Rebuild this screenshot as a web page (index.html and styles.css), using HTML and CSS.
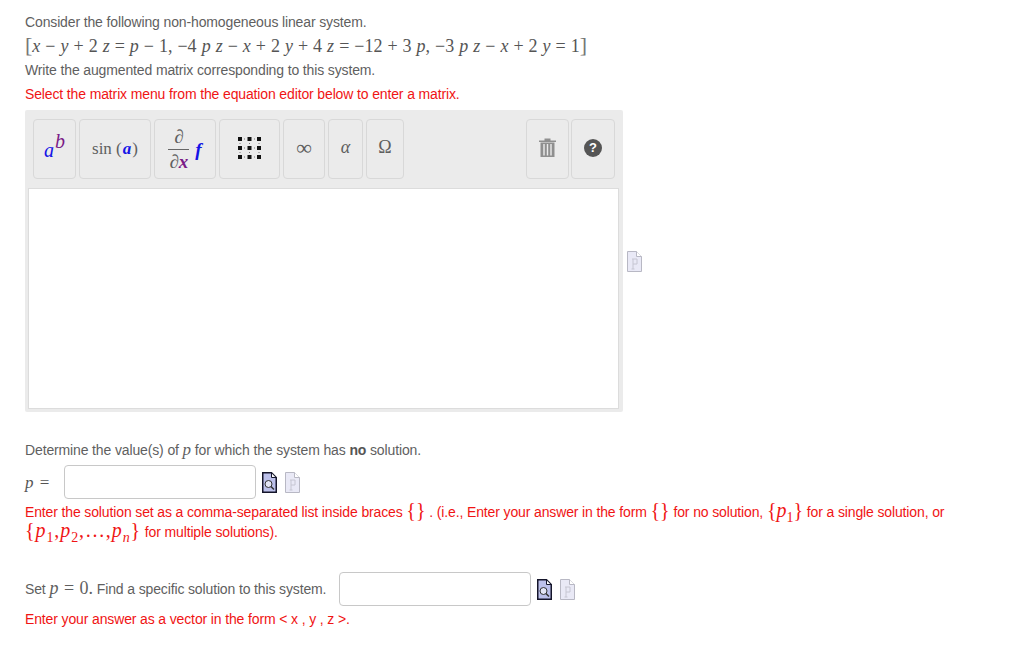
FILE: index.html
```html
<!DOCTYPE html>
<html lang="en">
<head>
<meta charset="utf-8">
<title>Linear system question</title>
<link rel="stylesheet" href="styles.css">
</head>
<body>
<svg class="defs" width="0" height="0" aria-hidden="true">
  <symbol id="doc-p" viewBox="0 0 15 21">
    <path d="M.5.5h9l5 5v15H.5z" fill="#e9e9f6" stroke="#b8b8c4"/>
    <path d="M9.500.5v5h5" fill="#fff" stroke="#b8b8c4"/>
    <path d="M5 8h5v5H6M6 8v10M4.500 18h3" fill="none" stroke="#c6c6d2"/>
  </symbol>
  <symbol id="doc-q" viewBox="0 0 15 21">
    <path d="M.75.75h8.750l4.750 4.750v14.750H.75z" fill="#bcc0ea" stroke="#15152a" stroke-width="1.500"/>
    <path d="M9.500.75v4.750h4.750z" fill="#fff" stroke="#15152a"/>
    <circle cx="6.500" cy="12" r="3.500" fill="#e4e6f6" stroke="#333"/>
    <path d="M9 14.500l3 3" stroke="#333" stroke-width="1.500"/>
  </symbol>
</svg>

<main class="page">
  <p class="line">Consider the following non-homogeneous linear system.</p>
  <p class="line math system"><span class="tall">[</span><i>x</i> − <i>y</i> + 2 <i>z</i> = <i>p</i> − 1, −4 <i>p</i> <i>z</i> − <i>x</i> + 2 <i>y</i> + 4 <i>z</i> = −12 + 3 <i>p</i>, −3 <i>p</i> <i>z</i> − <i>x</i> + 2 <i>y</i> = 1<span class="tall">]</span></p>
  <p class="line">Write the augmented matrix corresponding to this system.</p>
  <p class="line red">Select the matrix menu from the equation editor below to enter a matrix.</p>

  <section class="editor-row">
    <div class="editor">
      <div class="toolbar">
        <button class="tool w-43 math power"><span><i class="blue">a</i><sup class="purple"><i>b</i></sup></span></button>
        <button class="tool w-72 math sin"><span>sin (<i class="blue bold">a</i>)</span></button>
        <button class="tool w-62 math deriv">
          <span class="frac"><span>∂</span><span class="bar"></span><span>∂<i class="purple bold">x</i></span></span>
          <i class="blue bold">f</i>
        </button>
        <button class="tool w-61" aria-label="Matrix">
          <svg class="lift" width="23" height="22" viewBox="0 0 23 22">
            <g fill="#111">
              <rect x="0" y="0" width="4" height="4"/><rect x="9.500" y="0" width="4" height="4"/><rect x="19" y="0" width="4" height="4"/>
              <rect x="0" y="9" width="4" height="4"/><rect x="9.500" y="9" width="4" height="4"/><rect x="19" y="9" width="4" height="4"/>
              <rect x="0" y="18" width="4" height="4"/><rect x="9.500" y="18" width="4" height="4"/><rect x="19" y="18" width="4" height="4"/>
            </g>
            <g fill="#777">
              <rect x="6" y="1.500" width="1" height="1"/><rect x="16" y="1.500" width="1" height="1"/>
              <rect x="6" y="10.500" width="1" height="1"/><rect x="16" y="10.500" width="1" height="1"/>
              <rect x="6" y="19.500" width="1" height="1"/><rect x="16" y="19.500" width="1" height="1"/>
              <rect x="1.500" y="6" width="1" height="1"/><rect x="11" y="6" width="1" height="1"/><rect x="20.500" y="6" width="1" height="1"/>
              <rect x="1.500" y="15" width="1" height="1"/><rect x="11" y="15" width="1" height="1"/><rect x="20.500" y="15" width="1" height="1"/>
            </g>
          </svg>
        </button>
        <button class="tool w-42 math sym inf">∞</button>
        <button class="tool w-35 math sym"><i>α</i></button>
        <button class="tool w-38 math sym">Ω</button>
        <span class="spacer"></span>
        <button class="tool w-43" aria-label="Clear">
          <svg class="lift" width="17" height="19" viewBox="0 0 17 19">
            <path d="M0 2.500h17v1.500H0zM5.500 2.500V.5h6v2" fill="#8f8f8f"/>
            <path d="M1.500 4.500h14V19h-14z" fill="#8f8f8f"/>
            <path d="M5 6v11.500M8.500 6v11.500M12 6v11.500" stroke="#ebebeb" stroke-width="1.400"/>
          </svg>
        </button>
        <button class="tool w-44" aria-label="Help"><span class="help lift">?</span></button>
      </div>
      <div class="canvas"></div>
    </div>
    <svg class="doc" width="15" height="21"><use href="#doc-p"/></svg>
  </section>

  <p class="line determine">Determine the value(s) of <i class="math-i">p</i> for which the system has <b>no</b> solution.</p>
  <div class="answer first">
    <span class="math label"><i>p</i> =</span>
    <input class="field" type="text" aria-label="p">
    <svg class="doc" width="15" height="21"><use href="#doc-q"/></svg>
    <svg class="doc" width="15" height="21"><use href="#doc-p"/></svg>
  </div>
  <p class="line red hint">Enter the solution set as a comma-separated list inside braces <span class="math brace">{}</span> . (i.e., Enter your answer in the form <span class="math brace">{}</span> for no solution, <span class="math brace">{<i>p</i><sub>1</sub>}</span> for a single solution, or <span class="math brace wide">{<i>p</i><sub>1</sub>,<i>p</i><sub>2</sub>,…,<i>p</i><sub><i>n</i></sub>}</span> for multiple solutions).</p>

  <div class="answer second">
    <span class="set">Set <span class="math big"><i>p</i> = 0.</span> Find a specific solution to this system.</span>
    <input class="field" type="text" aria-label="Solution">
    <svg class="doc" width="15" height="21"><use href="#doc-q"/></svg>
    <svg class="doc" width="15" height="21"><use href="#doc-p"/></svg>
  </div>
  <p class="line red">Enter your answer as a vector in the form &lt; x , y , z &gt;.</p>
</main>
</body>
</html>
```

FILE: styles.css
```css
* { box-sizing: border-box; }

html, body {
  margin: 0;
  background: #fff;
}

body {
  width: 1024px;
  height: 666px;
  overflow: hidden;
  font-family: "Liberation Sans", Arial, sans-serif;
  font-size: 14px;
  letter-spacing: -0.135px;
  color: #5f5f5f;
}

.defs { position: absolute; }

.page { padding: 10px 0 0 25px; }

.line {
  margin: 0;
  line-height: 24px;
  height: 24px;
}

.red { color: #f01414; }

.math {
  font-family: "Liberation Serif", "Times New Roman", serif;
  letter-spacing: 0;
}

.math-i {
  font-family: "Liberation Serif", serif;
  font-size: 17px;
  letter-spacing: 0;
}

.system {
  font-size: 18px;
  color: #555;
  white-space: nowrap;
  word-spacing: 0.5px;
}

.tall { font-size: 22px; line-height: 0; font-weight: 400; color: #777; }

.editor-row {
  display: flex;
  align-items: center;
  gap: 4px;
  margin-top: 4px;
}

.editor {
  width: 598px;
  height: 302px;
  padding: 9px 4px 3px 3px;
  background: #ebebeb;
  border-radius: 2px;
  display: flex;
  flex-direction: column;
}

.toolbar {
  display: flex;
  gap: 3px;
  height: 60px;
  padding-left: 5px;
  padding-right: 4px;
}

.tool {
  display: flex;
  align-items: center;
  justify-content: center;
  gap: 6px;
  height: 60px;
  padding: 0;
  background: #ebebeb;
  border: 1px solid #d8d8d8;
  border-radius: 4px;
  color: #5f5f5f;
  flex: none;
}

.w-43 { width: 43px; }
.w-72 { width: 72px; }
.w-62 { width: 62px; }
.w-61 { width: 61px; }
.w-42 { width: 42px; }
.w-35 { width: 35px; }
.w-38 { width: 38px; }
.w-44 { width: 44px; margin-left: -1px; }

.lift { margin-bottom: 3px; }

.spacer { flex: 1; }

.blue { color: #1414e6; }
.purple { color: #7a1a86; }
.bold { font-weight: 700; }

.power { font-size: 20px; padding-top: 3px; }
.power sup { font-size: 20px; line-height: 0; position: relative; top: -1px; margin-left: 1px; vertical-align: 8px; }

.sin { font-size: 17px; }
.sin i { margin: 0 1px; }

.deriv { font-size: 19px; }
.deriv > i { margin-top: 1px; }

.frac {
  display: flex;
  flex-direction: column;
  align-items: center;
  line-height: 24px;
  gap: 0;
}

.frac .bar {
  width: 21px;
  height: 1px;
  background: #666;
}

.sym { font-size: 18px; padding-bottom: 3px; }
.inf { font-size: 22px; }

.help {
  display: block;
  width: 18px;
  height: 18px;
  border-radius: 50%;
  background: #555;
  color: #fff;
  font: 700 13px/18px "Liberation Sans", sans-serif;
  text-align: center;
}

.canvas {
  margin-top: 9px;
  flex: 1;
  background: #fff;
  border: 1px solid #dcdcdc;
}

.determine { margin-top: 26px; }

.determine b { color: #555; }

.answer {
  display: flex;
  align-items: center;
  white-space: nowrap;
}

.answer .doc { margin-left: 6px; }
.answer .doc + .doc { margin-left: 8px; }

.first { margin-top: 3px; }
.second { margin-top: 30px; }

.label {
  width: 39px;
  padding-top: 1px;
  font-size: 17px;
  word-spacing: 2px;
  color: #555;
}

.field {
  width: 192px;
  height: 34px;
  border: 1px solid #c8c8c8;
  border-radius: 4px;
  background: #fff;
  padding: 0;
  margin: 0;
}

.set { width: 314px; padding-bottom: 1px; }

.big { font-size: 18px; word-spacing: 1px; }

.hint {
  height: 40px;
  line-height: 20px;
  margin-top: 3px;
  width: 940px;
  margin-bottom: 0;
}

.brace { font-size: 20px; line-height: 0; }
.brace sub { font-size: 14px; line-height: 0; }
.wide { letter-spacing: 0.900px; }

.second + .line { margin-top: 1px; }
```
